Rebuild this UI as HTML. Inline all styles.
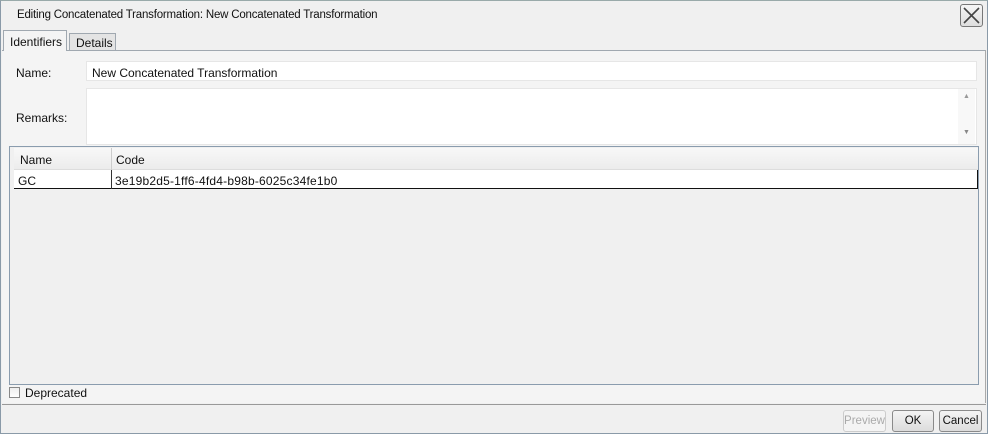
<!DOCTYPE html>
<html><head><style>
*{box-sizing:border-box;margin:0;padding:0}
body{width:988px;height:434px;overflow:hidden;background:#f0f0f0;font-family:"Liberation Sans",sans-serif;font-size:12px;color:#111;position:relative}
.a{position:absolute}
.win{left:0;top:0;width:988px;height:434px;border:1px solid #8a9aa8;border-top-color:#9aa}
.btn{border:1px solid #8a8a8a;border-radius:3px;background:linear-gradient(#f4f4f4,#dcdcdc);text-align:center;line-height:20px;font-size:11.5px}
</style></head><body>
<div class="a win"></div>
<div class="a" style="left:17px;top:9px;font-size:11.5px;letter-spacing:-0.2px">Editing Concatenated Transformation: New Concatenated Transformation</div>
<div class="a" style="left:960px;top:4px;width:23px;height:23px;border:1px solid #777;border-radius:3px;background:linear-gradient(#f6f6f6,#dedede)">
<svg width="21" height="21" viewBox="0 0 21 21"><path d="M3 3L18 18M18 3L3 18" stroke="#444" stroke-width="1.6"/></svg></div>
<div class="a" style="left:2px;top:50px;width:984px;height:353px;background:#f4f4f4;border-top:1px solid #a0a8b0;border-right:1px solid #aaa"></div>
<div class="a" style="left:3px;top:30px;width:64px;height:21px;background:#f4f4f4;border:1px solid #a0a8b0;border-bottom:none;padding:4px 0 0 6px">Identifiers</div>
<div class="a" style="left:69px;top:33px;width:47px;height:17px;background:#e4e4e4;border:1px solid #a0a8b0;border-bottom:none;padding:2px 0 0 6px">Details</div>
<div class="a" style="left:16px;top:66px">Name:</div>
<div class="a" style="left:86px;top:61px;width:891px;height:20px;background:#fff;border:1px solid #e6e6e6;padding:4px 0 0 5px">New Concatenated Transformation</div>
<div class="a" style="left:16px;top:111px">Remarks:</div>
<div class="a" style="left:86px;top:88px;width:891px;height:57px;background:#fff;border:1px solid #e6e6e6"></div>
<div class="a" style="left:958px;top:89px;width:17px;height:55px;background:#f8f8f8"></div>
<div class="a" style="left:963px;top:93px;color:#999;font-size:7px">▲</div>
<div class="a" style="left:963px;top:129px;color:#888;font-size:7px">▼</div>
<div class="a" style="left:9px;top:146px;width:970px;height:239px;background:#f0f0f0;border:1px solid #8a9cae"></div>
<div class="a" style="left:14px;top:148px;width:964px;height:22px;background:linear-gradient(#f8f8f8,#ececec);border-bottom:1px solid #ddd"></div>
<div class="a" style="left:111px;top:148px;width:1px;height:41px;background:#ccc"></div>
<div class="a" style="left:20px;top:153px">Name</div>
<div class="a" style="left:116px;top:153px">Code</div>
<div class="a" style="left:14px;top:170px;width:964px;height:19px;background:#fff;border-bottom:1px solid #111;border-right:1px solid #111"></div>
<div class="a" style="left:111px;top:170px;width:1px;height:19px;background:#333"></div>
<div class="a" style="left:18px;top:174px">GC</div>
<div class="a" style="left:115px;top:174px;letter-spacing:0.2px">3e19b2d5-1ff6-4fd4-b98b-6025c34fe1b0</div>
<div class="a" style="left:9px;top:387px;width:11px;height:11px;border:1px solid #888;background:linear-gradient(#eee,#fff)"></div>
<div class="a" style="left:25px;top:386px">Deprecated</div>
<div class="a" style="left:2px;top:404px;width:984px;height:1px;background:#999"></div>
<div class="a btn" style="left:843px;top:410px;width:43px;height:22px;color:#aaa;border-color:#ccc;background:#f4f4f4">Preview</div>
<div class="a btn" style="left:892px;top:410px;width:42px;height:22px">OK</div>
<div class="a btn" style="left:939px;top:410px;width:43px;height:22px">Cancel</div>
</body></html>
